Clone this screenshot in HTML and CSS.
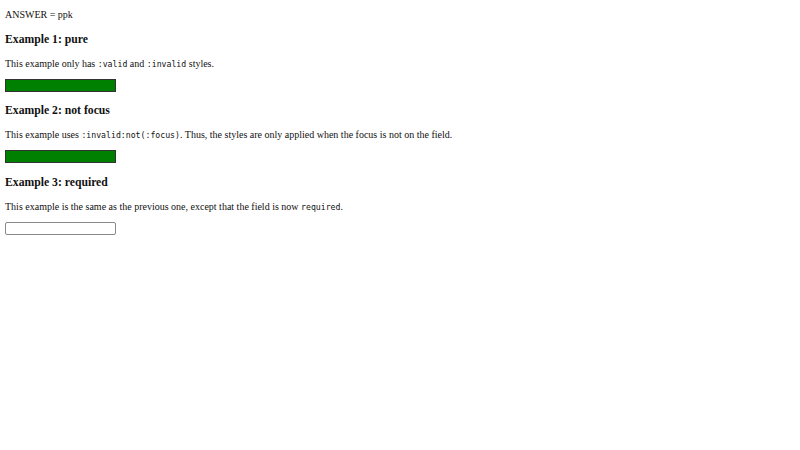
FILE: index.html
```html
<!DOCTYPE html>
<html lang="en">
<head>
  <meta charset="UTF-8">
  <title>:invalid examples</title>
  <link rel="stylesheet" href="styles.css">
</head>
<body>

  <div class="answer">ANSWER = ppk</div>

  <h3>Example 1: pure</h3>
  <p>This example only has <code>:valid</code> and <code>:invalid</code> styles.</p>
  <input type="text" class="field filled">

  <h3>Example 2: not focus</h3>
  <p>This example uses <code>:invalid:not(:focus)</code>. Thus, the styles are only applied when the focus is not on the field.</p>
  <input type="text" class="field filled">

  <h3>Example 3: required</h3>
  <p>This example is the same as the previous one, except that the field is now <code>required</code>.</p>
  <input type="text" class="field">

</body>
</html>
```

FILE: styles.css
```css
body {
  font-family: 'Liberation Serif', serif;
  font-size: 10px;
  color: #111;
  background: white;
  margin: 0;
  padding: 10px 5px;
}

.answer {
  line-height: 10px;
}

h3 {
  font-size: 11.7px;
  line-height: 16px;
  margin: 11.5px 0 9px;
}

p {
  line-height: 13px;
  margin: 0 0 9px;
}

code {
  font-family: 'DejaVu Sans Mono', monospace;
  font-size: 8.2px;
  line-height: 1;
}

.field {
  display: block;
  box-sizing: border-box;
  width: 111px;
  height: 13px;
  margin: 0;
  padding: 0;
  border: 1px solid #8a8a8a;
  border-radius: 2px;
  background: white;
}

.field.filled {
  background: green;
  border-color: #333;
  border-radius: 0;
}
```
